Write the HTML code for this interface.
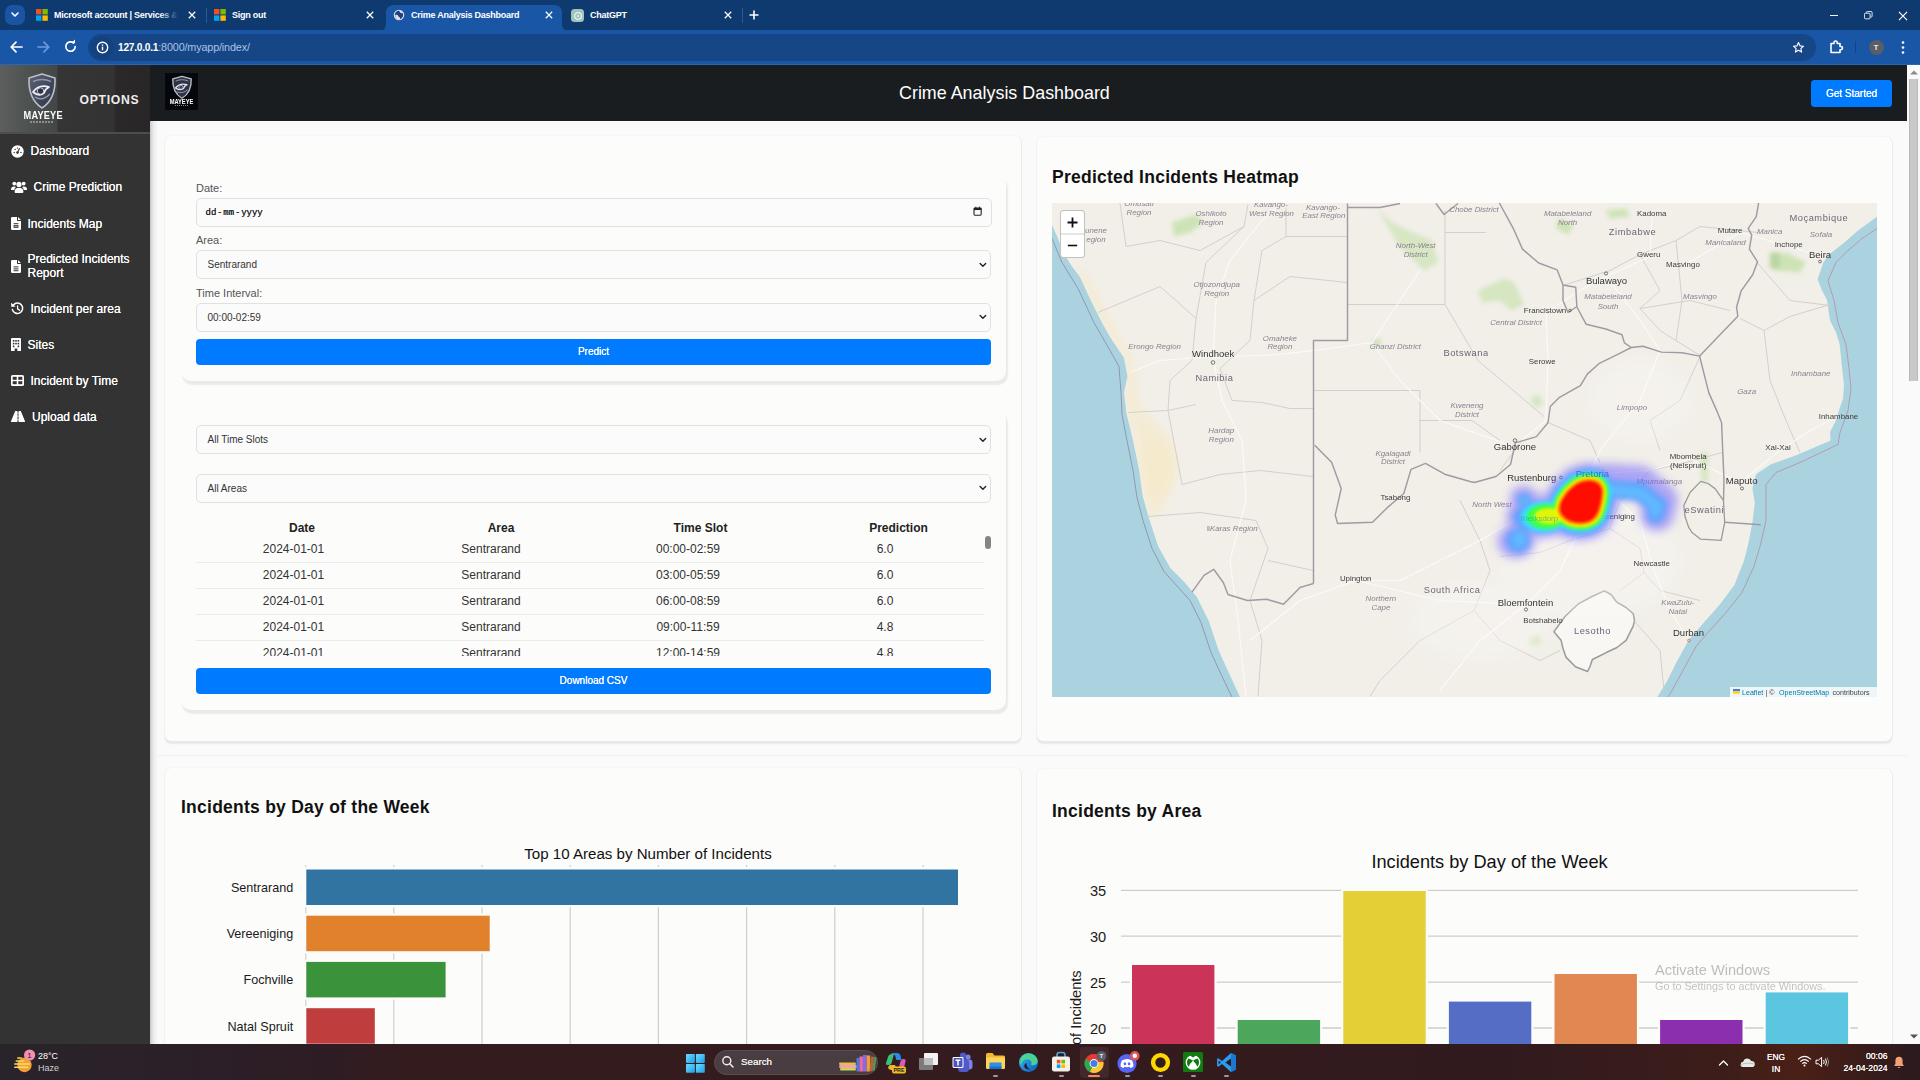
<!DOCTYPE html>
<html><head><meta charset="utf-8"><title>Crime Analysis Dashboard</title>
<style>
*{box-sizing:border-box}
html,body{margin:0;padding:0}
body{width:1920px;height:1080px;overflow:hidden;position:relative;background:#fafafa;font-family:"Liberation Sans",sans-serif;color:#222}
.abs{position:absolute}
/* ---------- browser chrome ---------- */
#tabs{position:absolute;left:0;top:0;width:1920px;height:31px;background:#0e3a70}
#toolbar{position:absolute;left:0;top:30px;width:1920px;height:35px;background:#1a56a6;border-bottom:1px solid #2b68b4}
.tabtxt{position:absolute;top:10.4px;font-size:9px;font-weight:700;color:#fff;white-space:nowrap;letter-spacing:-0.25px}
.tabx{position:absolute;top:9px;width:12px;height:12px}
#omni{position:absolute;left:88px;top:34px;width:1728px;height:27px;border-radius:14px;background:#164685}
/* ---------- page ---------- */
#page{position:absolute;left:0;top:65px;width:1920px;height:979px;overflow:hidden;background:#fafafa}
#side{position:absolute;left:0;top:0;width:150px;height:979px;background:#333333}
#sidehead{position:absolute;left:0;top:0;width:150px;height:68.5px;background:linear-gradient(90deg,#5c5f5d 0px,#4f5351 25px,#424644 57px,#353535 58px,#333333 114px,#2b2829 116px,#292627 150px);border-bottom:2px solid #4d4d4d}
.mi{position:absolute;left:0;color:#fff;font-size:12px;white-space:nowrap;text-shadow:0 0 .4px #fff}
#topnav{position:absolute;left:150px;top:0;width:1757px;height:56px;background:#1a1d20}
.card{position:absolute;background:#fcfcfb;border-radius:6px;box-shadow:0 2.5px 1.5px rgba(0,0,0,.07),1px 0 1px rgba(0,0,0,.05),-1px 0 1px rgba(0,0,0,.03),0 -1px 1px rgba(0,0,0,.015)}
.inner{position:absolute;border-radius:10px;box-shadow:1.5px 3.5px 1.5px rgba(0,0,0,.07)}
.lbl{position:absolute;font-size:11px;color:#555}
.inp{position:absolute;left:196px;width:794.5px;height:29px;border:1px solid #e1e1e1;border-radius:5px;background:#fbfbfb;font-size:10px;color:#333;padding:8px 0 0 10.5px;letter-spacing:0}
.btn{position:absolute;left:196px;width:795px;height:26px;border-radius:4px;background:#007bff;color:#fff;font-size:10px;text-align:center;line-height:26px;text-shadow:0 0 .6px #fff}
.h{position:absolute;font-weight:700;font-size:17.5px;color:#111;white-space:nowrap;letter-spacing:.25px}
.th{position:absolute;font-weight:700;font-size:12px;color:#222;transform:translateX(-50%);white-space:nowrap}
.td{position:absolute;font-size:12px;color:#333;transform:translateX(-50%);white-space:nowrap}
.rl{position:absolute;left:196px;width:788px;height:1px;background:#ebebeb}
/* ---------- taskbar ---------- */
#task{position:absolute;left:0;top:1044px;width:1920px;height:36px;background:linear-gradient(90deg,#29232a 0,#2b2028 170px,#2e1c24 330px,#341c1e 400px,#341b1d 1000px,#311a1e 1500px,#3c1d1a 1720px,#4a2016 1800px,#3a1c1a 1860px,#2a1a1e 1920px)}
.tt{position:absolute;color:#fff;font-size:9.5px;white-space:nowrap}
</style></head>
<body>
<!-- ======= TAB STRIP ======= -->
<div id="tabs">
  <div class="abs" style="left:5px;top:5px;width:20px;height:20px;border-radius:7px;background:#1a54a2"></div>
  <svg class="abs" style="left:10px;top:11px" width="10" height="8" viewBox="0 0 10 8"><path d="M2 2 L5 5 L8 2" fill="none" stroke="#fff" stroke-width="1.6" stroke-linecap="round" stroke-linejoin="round"/></svg>
  <!-- tab 1 -->
  <svg class="abs" style="left:36px;top:9px" width="12" height="12"><rect x="0" y="0" width="5.4" height="5.4" fill="#f25022"/><rect x="6.4" y="0" width="5.4" height="5.4" fill="#7fba00"/><rect x="0" y="6.4" width="5.4" height="5.4" fill="#00a4ef"/><rect x="6.4" y="6.4" width="5.4" height="5.4" fill="#ffb900"/></svg>
  <div class="tabtxt" id="t1" style="left:54px;width:124px;overflow:hidden">Microsoft account | Services &amp;</div>
  <div class="abs" style="left:160px;top:6px;width:18px;height:18px;background:linear-gradient(90deg,rgba(14,58,112,0),#0e3a70)"></div>
  <svg class="tabx" style="left:186px"><path d="M2.8 2.8 L9.2 9.2 M9.2 2.8 L2.8 9.2" stroke="#fff" stroke-width="1.25"/></svg>
  <div class="abs" style="left:206px;top:8px;width:1px;height:15px;background:#2a5a96"></div>
  <!-- tab 2 -->
  <svg class="abs" style="left:214px;top:9px" width="12" height="12"><rect x="0" y="0" width="5.4" height="5.4" fill="#f25022"/><rect x="6.4" y="0" width="5.4" height="5.4" fill="#7fba00"/><rect x="0" y="6.4" width="5.4" height="5.4" fill="#00a4ef"/><rect x="6.4" y="6.4" width="5.4" height="5.4" fill="#ffb900"/></svg>
  <div class="tabtxt" id="t2" style="left:232px">Sign out</div>
  <svg class="tabx" style="left:364px"><path d="M2.8 2.8 L9.2 9.2 M9.2 2.8 L2.8 9.2" stroke="#fff" stroke-width="1.25"/></svg>
  <!-- active tab -->
  <svg class="abs" style="left:378px;top:5px" width="192" height="26" viewBox="0 0 192 27" preserveAspectRatio="none"><path d="M0 27 C6 27 8 24 8 19 L8 8 C8 3 11 0 16 0 L176 0 C181 0 184 3 184 8 L184 19 C184 24 186 27 192 27 Z" fill="#1a56a6"/></svg>
  <svg class="abs" style="left:392px;top:8.3px" width="14" height="14" viewBox="0 0 14 14"><circle cx="7" cy="7" r="4.7" fill="#21407f" stroke="#dde1ee" stroke-width="1.1"/><path d="M3.2 7.2 C4.4 6.4 5.8 6.8 6.2 8 C6.6 9.2 8 9 8.2 10.2 C8.3 11 7.4 11.6 6.4 11.5 C4.4 11.2 3 9.4 3.2 7.2 Z M7.2 2.6 C8.6 2.5 10.2 3.4 10.9 4.8 C10.2 5.6 8.8 5.4 8.2 4.6 C7.8 4 7.2 3.4 7.2 2.6 Z" fill="#e4dfe8"/></svg>
  <div class="tabtxt" id="t3" style="left:411px">Crime Analysis Dashboard</div>
  <svg class="tabx" style="left:543px"><path d="M2.8 2.8 L9.2 9.2 M9.2 2.8 L2.8 9.2" stroke="#fff" stroke-width="1.25"/></svg>
  <!-- tab 4 -->
  <div class="abs" style="left:571px;top:9px;width:13px;height:13px;border-radius:3.5px;background:#9fc5bd"></div>
  <svg class="abs" style="left:572.5px;top:10.5px" width="10" height="10" viewBox="0 0 10 10"><circle cx="5" cy="5" r="3.4" fill="none" stroke="#e4f1ee" stroke-width="1.3"/><circle cx="5" cy="5" r="1.1" fill="#e4f1ee"/></svg>
  <div class="tabtxt" id="t4" style="left:590px">ChatGPT</div>
  <svg class="tabx" style="left:722px"><path d="M2.8 2.8 L9.2 9.2 M9.2 2.8 L2.8 9.2" stroke="#fff" stroke-width="1.25"/></svg>
  <div class="abs" style="left:742px;top:8px;width:1px;height:15px;background:#2a5a96"></div>
  <svg class="abs" style="left:748px;top:9px" width="12" height="12"><path d="M6 1.5 V10.5 M1.5 6 H10.5" stroke="#fff" stroke-width="1.6"/></svg>
  <!-- window controls -->
  <div class="abs" style="left:1830px;top:15px;width:7.5px;height:1px;background:#f4f4f4"></div>
  <svg class="abs" style="left:1864px;top:11px" width="10" height="10" viewBox="0 0 11.5 11.5"><rect x="0.5" y="2.5" width="6.5" height="6.5" rx="1.2" fill="none" stroke="#fff"/><path d="M2.8 2.3 V1.6 Q2.8 .5 3.9 .5 H8 Q9.3 .5 9.3 1.8 V6 Q9.3 7 8.3 7 H7.4" fill="none" stroke="#fff"/></svg>
  <svg class="abs" style="left:1898px;top:10.5px" width="10" height="10" viewBox="0 0 11 11"><path d="M1 1 L10 10 M10 1 L1 10" stroke="#fff" stroke-width="1.25"/></svg>
</div>
<!-- ======= TOOLBAR ======= -->
<div id="toolbar"></div>
<div id="omni"></div>
<svg class="abs" style="left:9px;top:40px" width="15" height="14" viewBox="0 0 15 14"><path d="M13 7 H2.5 M7 2.2 L2.2 7 L7 11.8" fill="none" stroke="#fff" stroke-width="1.7" stroke-linecap="round" stroke-linejoin="round"/></svg>
<svg class="abs" style="left:36px;top:40px" width="15" height="14" viewBox="0 0 15 14"><path d="M2 7 H12.5 M8 2.2 L12.8 7 L8 11.8" fill="none" stroke="#6b9bdc" stroke-width="1.7" stroke-linecap="round" stroke-linejoin="round"/></svg>
<svg class="abs" style="left:63px;top:39px" width="15" height="15" viewBox="0 0 15 15"><path d="M12.2 7.5 A4.7 4.7 0 1 1 10.6 4" fill="none" stroke="#fff" stroke-width="1.7" stroke-linecap="round"/><path d="M8.4 3.9 H12 V.6 Z" fill="#fff"/></svg>
<div class="abs" style="left:91px;top:36px;width:23px;height:23px;border-radius:12px;background:#14427f"></div>
<svg class="abs" style="left:96px;top:41px" width="13" height="13" viewBox="0 0 13 13"><circle cx="6.5" cy="6.5" r="5.2" fill="none" stroke="#fff" stroke-width="1.4"/><rect x="5.8" y="5.7" width="1.4" height="3.6" fill="#fff"/><rect x="5.8" y="3.4" width="1.4" height="1.4" fill="#fff"/></svg>
<div class="abs" id="url" style="left:118px;top:41px;font-size:10.8px;color:#fff;white-space:nowrap;letter-spacing:-.15px"><b style="font-weight:700;font-size:10.2px;letter-spacing:-.25px">127.0.0.1</b><span style="color:#a9c3e8">:8000/myapp/index/</span></div>
<svg class="abs" style="left:1792px;top:41px" width="13" height="13" viewBox="0 0 15 15"><path d="M7.5 1.8 L9.2 5.6 L13.3 6 L10.2 8.8 L11.1 12.8 L7.5 10.7 L3.9 12.8 L4.8 8.8 L1.7 6 L5.8 5.6 Z" fill="none" stroke="#fff" stroke-width="1.3" stroke-linejoin="round"/></svg>
<svg class="abs" style="left:1828px;top:39px" width="16" height="16" viewBox="0 0 16 16"><path d="M3 4.5 H6 V3.6 A1.6 1.6 0 0 1 9.2 3.6 V4.5 H12 V7.5 H12.9 A1.6 1.6 0 0 1 12.9 10.7 H12 V13.5 H3 Z" fill="none" stroke="#fff" stroke-width="1.6" stroke-linejoin="round"/></svg>
<div class="abs" style="left:1855px;top:41px;width:1px;height:12px;background:#12438a"></div>
<div class="abs" style="left:1868.5px;top:40px;width:15px;height:15px;border-radius:8px;background:#585d66;color:#ececec;font-size:7.5px;font-weight:700;text-align:center;line-height:15px">T</div>
<svg class="abs" style="left:1900px;top:40px" width="6" height="15"><circle cx="3" cy="2.5" r="1.3" fill="#fff"/><circle cx="3" cy="7.5" r="1.3" fill="#fff"/><circle cx="3" cy="12.5" r="1.3" fill="#fff"/></svg>

<!-- ======= PAGE ======= -->
<div id="page">
<!-- main bg shadow next to sidebar -->
<div class="abs" style="left:150px;top:56px;width:8px;height:923px;background:linear-gradient(90deg,#c9c9c9,#ececec 45%,#fafafa)"></div>
<!-- SIDEBAR -->
<div id="side">
  <div id="sidehead"></div>
  <!-- shield logo -->
  <svg class="abs" style="left:25px;top:7px" width="34" height="38" viewBox="0 0 34 38">
    <defs><linearGradient id="shg" x1="0" y1="0" x2="1" y2="1"><stop offset="0" stop-color="#5a6275"/><stop offset="1" stop-color="#2d3345"/></linearGradient></defs>
    <path d="M17 2 L30 6 C30.5 18 28 29 17 36 C6 29 3.5 18 4 6 Z" fill="url(#shg)" stroke="#b9bec9" stroke-width="1.6" stroke-linejoin="round"/>
    <path d="M8 9.5 Q17 5.5 26 9.5" fill="none" stroke="#8e96a8" stroke-width="1.4"/>
    <path d="M8 20 Q14 12 24 15 Q20 17 19 21 Q14 25 8 20 Z" fill="none" stroke="#f2f2f2" stroke-width="1.7" stroke-linejoin="round"/>
    <circle cx="15.5" cy="19" r="3.2" fill="#2a3150" stroke="#dfe2ea" stroke-width=".8"/>
    <path d="M10 25 Q17 30 25 22" fill="none" stroke="#9aa1b3" stroke-width="1.2"/>
  </svg>
  <div class="abs" style="left:22px;top:45px;width:40px;text-align:center;font-size:10px;font-weight:700;color:#fff;letter-spacing:.2px;transform:scaleX(.92);transform-origin:center">MAYEYE</div>
  <div class="abs" style="left:30px;top:55.5px;width:24px;height:2px;background:repeating-linear-gradient(90deg,#8d8d8d 0 2px,transparent 2px 3px)"></div>
  <div class="abs" id="opt" style="left:79.5px;top:27.5px;font-size:12.2px;font-weight:700;color:#ededed;letter-spacing:.7px">OPTIONS</div>

  <!-- menu -->
  <svg class="abs" style="left:10.5px;top:80px" width="13" height="13" viewBox="0 0 13 13"><circle cx="6.5" cy="6.5" r="6.2" fill="#fff"/><circle cx="6.5" cy="7.6" r="1.3" fill="#333"/><path d="M6.5 7.6 L8.6 3.2" stroke="#333" stroke-width="1.1"/><circle cx="3.2" cy="7.5" r=".7" fill="#333"/><circle cx="4.2" cy="4.4" r=".7" fill="#333"/><circle cx="6.5" cy="3.1" r=".7" fill="#333"/><circle cx="9.9" cy="7.5" r=".7" fill="#333"/></svg>
  <div class="mi" style="left:30.5px;top:78.8px">Dashboard</div>

  <svg class="abs" style="left:10.5px;top:116px" width="16" height="12" viewBox="0 0 16 12"><circle cx="3.3" cy="2.6" r="1.9" fill="#fff"/><circle cx="12.7" cy="2.6" r="1.9" fill="#fff"/><circle cx="8" cy="3.4" r="2.6" fill="#fff"/><path d="M0 8.4 Q0 5.4 3.2 5.4 Q4.4 5.4 5 6 Q3.4 7 3.3 9 H.6 Q0 9 0 8.4 Z M16 8.4 Q16 5.4 12.8 5.4 Q11.6 5.4 11 6 Q12.6 7 12.7 9 H15.4 Q16 9 16 8.4 Z M3.6 10.8 Q3.6 6.8 8 6.8 Q12.4 6.8 12.4 10.8 Q12.4 12 11.4 12 H4.6 Q3.6 12 3.6 10.8 Z" fill="#fff"/></svg>
  <div class="mi" style="left:33.5px;top:114.8px">Crime Prediction</div>

  <svg class="abs" style="left:10.5px;top:151.5px" width="10" height="13" viewBox="0 0 10 13"><path d="M1.2 0 H6 V3.2 Q6 4 6.8 4 H10 V11.8 Q10 13 8.8 13 H1.2 Q0 13 0 11.8 V1.2 Q0 0 1.2 0 Z M7 0 L10 3 H7 Z" fill="#fff"/><rect x="2.6" y="6.2" width="4.8" height="1" fill="#333"/><rect x="2.6" y="8" width="4.8" height="2.8" fill="#333"/><rect x="3.4" y="8.8" width="3.2" height=".7" fill="#fff"/></svg>
  <div class="mi" style="left:27.5px;top:151.5px">Incidents Map</div>

  <svg class="abs" style="left:10.5px;top:194.8px" width="10" height="13" viewBox="0 0 10 13"><path d="M1.2 0 H6 V3.2 Q6 4 6.8 4 H10 V11.8 Q10 13 8.8 13 H1.2 Q0 13 0 11.8 V1.2 Q0 0 1.2 0 Z M7 0 L10 3 H7 Z" fill="#fff"/><rect x="2.6" y="6.4" width="4.8" height="1" fill="#333"/><rect x="2.6" y="8.4" width="4.8" height="1" fill="#333"/><rect x="2.6" y="10.2" width="4.8" height="1" fill="#333"/></svg>
  <div class="mi" style="left:27.5px;top:188.3px;line-height:13.5px">Predicted Incidents<br>Report</div>

  <svg class="abs" style="left:10.5px;top:237px" width="13" height="13" viewBox="0 0 13 13"><path d="M2.4 3 A5.2 5.2 0 1 1 1.4 7.6" fill="none" stroke="#fff" stroke-width="1.5" stroke-linecap="round"/><path d="M0 .8 L.4 5 L4.6 4.4 Z" fill="#fff"/><path d="M6.6 3.8 V6.8 L8.6 8.3" fill="none" stroke="#fff" stroke-width="1.3" stroke-linecap="round"/></svg>
  <div class="mi" style="left:30.5px;top:236.5px">Incident per area</div>

  <svg class="abs" style="left:10.5px;top:273px" width="10" height="13" viewBox="0 0 10 13"><path d="M1 0 H9 Q10 0 10 1 V13 H6.3 V10.4 H3.7 V13 H0 V1 Q0 0 1 0 Z" fill="#fff"/><g fill="#333"><rect x="1.8" y="2" width="1.6" height="1.6"/><rect x="4.2" y="2" width="1.6" height="1.6"/><rect x="6.6" y="2" width="1.6" height="1.6"/><rect x="1.8" y="4.8" width="1.6" height="1.6"/><rect x="4.2" y="4.8" width="1.6" height="1.6"/><rect x="6.6" y="4.8" width="1.6" height="1.6"/><rect x="1.8" y="7.6" width="1.6" height="1.6"/><rect x="6.6" y="7.6" width="1.6" height="1.6"/></g></svg>
  <div class="mi" style="left:27.5px;top:272.5px">Sites</div>

  <svg class="abs" style="left:10.5px;top:310px" width="13" height="11" viewBox="0 0 13 11"><rect x="0" y="0" width="13" height="11" rx="1.6" fill="#fff"/><g fill="#333"><rect x="1.7" y="1.8" width="4" height="3"/><rect x="7.3" y="1.8" width="4" height="3"/><rect x="1.7" y="6.2" width="4" height="3"/><rect x="7.3" y="6.2" width="4" height="3"/></g></svg>
  <div class="mi" style="left:30.5px;top:308.5px">Incident by Time</div>

  <svg class="abs" style="left:10.5px;top:346px" width="14" height="11" viewBox="0 0 14 11"><path d="M4.2 0 H6.4 V11 H.6 Q-.3 11 .1 10 Z M7.6 0 H9.8 L13.9 10 Q14.3 11 13.4 11 H7.6 Z" fill="#fff"/><rect x="6.5" y="1.4" width="1" height="1.8" fill="#fff"/><rect x="6.5" y="4.4" width="1" height="1.8" fill="#fff"/><rect x="6.5" y="7.6" width="1" height="2" fill="#fff"/></svg>
  <div class="mi" style="left:32px;top:344.5px">Upload data</div>
</div>

<!-- TOP NAV -->
<div id="topnav">
  <div class="abs" style="left:15px;top:8px;width:33px;height:37px;background:#05070c"></div>
  <svg class="abs" style="left:20px;top:9.5px" width="24" height="24.5" viewBox="0 0 34 38" preserveAspectRatio="none">
    <path d="M17 2 L30 6 C30.5 18 28 29 17 36 C6 29 3.5 18 4 6 Z" fill="#2d3345" stroke="#b9bec9" stroke-width="2" stroke-linejoin="round"/>
    <path d="M8 9.5 Q17 5.5 26 9.5" fill="none" stroke="#8e96a8" stroke-width="1.6"/>
    <path d="M8 20 Q14 12 24 15 Q20 17 19 21 Q14 25 8 20 Z" fill="none" stroke="#e8e8e8" stroke-width="2" stroke-linejoin="round"/>
    <circle cx="15.5" cy="19" r="3" fill="#39415e" stroke="#cfd3de" stroke-width="1"/>
    <path d="M10 26 Q17 30 25 23" fill="none" stroke="#9aa1b3" stroke-width="1.4"/>
  </svg>
  <div class="abs" style="left:15px;top:32.5px;width:33px;text-align:center;font-size:6.5px;font-weight:700;color:#fff;letter-spacing:0;transform:scaleX(.88)">MAYEYE</div><div class="abs" style="left:25px;top:39.5px;width:14px;height:1.2px;background:repeating-linear-gradient(90deg,#8a8a8a 0 1.2px,transparent 1.2px 2px)"></div>
  <div class="abs" id="title" style="left:749px;top:18px;font-size:17.9px;color:#fff;white-space:nowrap">Crime Analysis Dashboard</div>
  <div class="abs" id="gs" style="left:1661px;top:15px;width:81px;height:27px;border-radius:3.5px;background:#007bff;color:#fff;font-size:10px;text-align:center;line-height:28px;text-shadow:0 0 .6px #fff">Get Started</div>
</div>

<!-- SCROLLBAR -->
<div class="abs" style="left:1907px;top:0;width:13px;height:979px;background:#fafafa"></div>
<svg class="abs" style="left:1910px;top:5px" width="8" height="5"><path d="M0 4.5 L4 .5 L8 4.5 Z" fill="#8b8b8b"/></svg>
<div class="abs" style="left:1909px;top:14px;width:9px;height:302px;background:#cac9c9;border-left:1px solid #b9b7b8;border-right:1px solid #b9b7b8"></div>
<svg class="abs" style="left:1910px;top:969px" width="8" height="5"><path d="M0 .5 L4 4.5 L8 .5 Z" fill="#555"/></svg>

<div class="abs" style="left:158px;top:690px;width:1749px;height:1px;background:#f0efee"></div>
<!-- LEFT CARD (form + table) -->
<div class="card" style="left:165px;top:71px;width:856px;height:605px"></div>
<div class="inner" style="left:181px;top:110px;width:825px;height:206px"></div>
<div class="lbl" style="left:196px;top:116.5px">Date:</div>
<div class="inp" style="top:132.5px;width:796px;font-family:'Liberation Mono',monospace;font-size:9px;padding-left:8.5px;padding-top:9.5px;letter-spacing:0;color:#1f1f1f;text-shadow:0 0 .3px #333">dd<span style="margin:0 .8px">-</span>mm<span style="margin:0 .8px">-</span>yyyy</div>
<svg class="abs" style="left:972.8px;top:141.3px" width="9.2" height="10.4" viewBox="0 0 11 12"><rect x="1.2" y="2.2" width="8.6" height="8.6" rx="1" fill="none" stroke="#222" stroke-width="1.3"/><rect x="1.2" y="2.2" width="8.6" height="2.4" fill="#222"/><rect x="2.8" y=".6" width="1.2" height="2" fill="#222"/><rect x="7" y=".6" width="1.2" height="2" fill="#222"/></svg>
<div class="lbl" style="left:196px;top:169px">Area:</div>
<div class="inp" style="top:185px">Sentrarand</div>
<div class="lbl" style="left:196px;top:221.5px">Time Interval:</div>
<div class="inp" style="top:237.5px">00:00-02:59</div>
<div class="btn" style="top:274px">Predict</div>

<div class="inner" style="left:181px;top:345px;width:825px;height:300px"></div>
<div class="inp" style="top:360px">All Time Slots</div>
<div class="inp" style="top:408.5px">All Areas</div>
<!-- select chevrons -->
<svg class="abs chev" style="left:979.3px;top:196.6px" width="7.8" height="6.2" viewBox="0 0 9 7"><path d="M1.3 1.6 L4.5 4.8 L7.7 1.6" fill="none" stroke="#222" stroke-width="1.6" stroke-linecap="round" stroke-linejoin="round"/></svg>
<svg class="abs chev" style="left:979.3px;top:249.1px" width="7.8" height="6.2" viewBox="0 0 9 7"><path d="M1.3 1.6 L4.5 4.8 L7.7 1.6" fill="none" stroke="#222" stroke-width="1.6" stroke-linecap="round" stroke-linejoin="round"/></svg>
<svg class="abs chev" style="left:979.3px;top:371.6px" width="7.8" height="6.2" viewBox="0 0 9 7"><path d="M1.3 1.6 L4.5 4.8 L7.7 1.6" fill="none" stroke="#222" stroke-width="1.6" stroke-linecap="round" stroke-linejoin="round"/></svg>
<svg class="abs chev" style="left:979.3px;top:420.1px" width="7.8" height="6.2" viewBox="0 0 9 7"><path d="M1.3 1.6 L4.5 4.8 L7.7 1.6" fill="none" stroke="#222" stroke-width="1.6" stroke-linecap="round" stroke-linejoin="round"/></svg>
<!-- table -->
<div class="th" style="left:302px;top:456px">Date</div>
<div class="th" style="left:501px;top:456px">Area</div>
<div class="th" style="left:700.5px;top:456px">Time Slot</div>
<div class="th" style="left:898.5px;top:456px">Prediction</div>
<div class="abs" style="left:196px;top:470px;width:796px;height:121px;overflow:hidden">
  <div class="td" style="left:97.5px;top:7px">2024-01-01</div><div class="td" style="left:295px;top:7px">Sentrarand</div><div class="td" style="left:492px;top:7px">00:00-02:59</div><div class="td" style="left:689px;top:7px">6.0</div>
  <div class="td" style="left:97.5px;top:33px">2024-01-01</div><div class="td" style="left:295px;top:33px">Sentrarand</div><div class="td" style="left:492px;top:33px">03:00-05:59</div><div class="td" style="left:689px;top:33px">6.0</div>
  <div class="td" style="left:97.5px;top:59px">2024-01-01</div><div class="td" style="left:295px;top:59px">Sentrarand</div><div class="td" style="left:492px;top:59px">06:00-08:59</div><div class="td" style="left:689px;top:59px">6.0</div>
  <div class="td" style="left:97.5px;top:85px">2024-01-01</div><div class="td" style="left:295px;top:85px">Sentrarand</div><div class="td" style="left:492px;top:85px">09:00-11:59</div><div class="td" style="left:689px;top:85px">4.8</div>
  <div class="td" style="left:97.5px;top:111px">2024-01-01</div><div class="td" style="left:295px;top:111px">Sentrarand</div><div class="td" style="left:492px;top:111px">12:00-14:59</div><div class="td" style="left:689px;top:111px">4.8</div>
</div>
<div class="rl" style="top:497px"></div><div class="rl" style="top:523px"></div><div class="rl" style="top:549px"></div><div class="rl" style="top:575px"></div>
<div class="abs" style="left:984.5px;top:470.5px;width:6px;height:13.5px;border-radius:3px;background:#858585"></div>
<div class="btn" style="top:602.5px">Download CSV</div>

<!-- RIGHT CARD (map) -->
<div class="card" style="left:1037px;top:72px;width:855px;height:604px"></div>
<div class="h" id="h1" style="left:1052px;top:102px">Predicted Incidents Heatmap</div>
<svg class="abs" id="map" style="left:1052px;top:137.5px" width="825" height="494" viewBox="1052 202.5 825 494" font-family="Liberation Sans, sans-serif">
<defs>
  <filter id="b1" x="-30%" y="-30%" width="160%" height="160%"><feGaussianBlur stdDeviation="1"/></filter>
  <filter id="b15" x="-30%" y="-30%" width="160%" height="160%"><feGaussianBlur stdDeviation="1.5"/></filter>
  <filter id="b2" x="-30%" y="-30%" width="160%" height="160%"><feGaussianBlur stdDeviation="2"/></filter>
  <filter id="b3" x="-30%" y="-30%" width="160%" height="160%"><feGaussianBlur stdDeviation="3.2"/></filter>
  <filter id="b5" x="-30%" y="-30%" width="160%" height="160%"><feGaussianBlur stdDeviation="5"/></filter>
  <filter id="b8" x="-50%" y="-50%" width="200%" height="200%"><feGaussianBlur stdDeviation="8"/></filter>
</defs>
<rect x="1052" y="202.5" width="825" height="494" fill="#f2efe9"/>
<!-- sandy Namib -->
<g filter="url(#b3)" opacity=".6"><path d="M1072 262 L1080 276 L1096 311 L1110 337 L1124 357 L1127.5 376 L1124 392 L1126 413 L1131 431 L1133 440 L1139 469 L1143 495 L1149 517 L1158 517 L1168 497 L1177 470 L1174 446 L1166 432 L1150 416 L1137 397 L1138 378 L1133 356 L1120 334 L1105 308 L1088 274 Z" fill="#f6eacb"/></g>
<g filter="url(#b8)" opacity=".6"><ellipse cx="1158" cy="466" rx="16" ry="30" fill="#f7e9c4"/></g>
<!-- green patches -->
<g filter="url(#b2)" fill="#cde3b5">
  <path d="M1172 222 L1196 214 L1204 222 L1190 232 L1174 236 Z"/>
  <path d="M1378 208 L1392 222 L1404 228 L1432 240 L1438 262 L1424 270 L1412 258 L1398 244 L1388 226 Z" opacity=".75"/>
  <path d="M1478 290 L1496 282 L1504 278 L1514 282 L1524 304 L1512 310 L1500 300 L1482 302 Z" opacity=".8"/>
  <path d="M1558 218 L1574 224 L1568 234 L1556 228 Z"/><path d="M1606 210 L1626 208 L1630 216 L1610 218 Z"/>
  <path d="M1772 256 L1786 252 L1806 262 L1800 272 L1774 270 Z"/><path d="M1770 252 h10 v16 h-10 z" fill="#b9d6a0"/>
  <path d="M1700 452 h8 v30 h-6 z" opacity=".8"/><path d="M1528 638 l10 -4 l4 8 l-10 4 z" opacity=".7"/>
  <path d="M1372 340 l8 -2 l2 6 l-9 2 z"/><path d="M1530 398 l8 -4 l6 8 l-8 6 z" opacity=".8"/>
</g>
<!-- water -->
<path id="wsea" d="M1052 224.3 L1058 238 L1063.9 253.2 L1072 266 L1080 276.4 L1088 294 L1096.3 311 L1103 324 L1110 336.6 L1117 347 L1124 357.4 L1127.5 376 L1124 392 L1126.4 413 L1131 431.5 L1133 440 L1139 468.9 L1142.7 495.4 L1148.7 517 L1158.3 545.9 L1170.3 567.6 L1184.8 582 L1196.8 596.4 L1208.8 620.5 L1218.5 649.4 L1230.5 675.9 L1240 696.5 L1052 696.5 Z" fill="#aad3df"/>
<path id="esea" d="M1877 216.2 L1858 230 L1842 244 L1829 254 L1823.4 262 L1817.6 278.7 L1822 290 L1827 299.5 L1830 320 L1836 332 L1839.6 343.5 L1842 366.7 L1844 385 L1843 398 L1839.6 408 L1836 420 L1830 431.5 L1830.6 440 L1812 448 L1797 454.4 L1770.5 464 L1756 473.7 L1752.4 488 L1754.8 502.6 L1752.4 521.8 L1748.8 541 L1744 560.3 L1734.4 584.4 L1720 603.7 L1703 623 L1688.6 639.8 L1676.6 661.4 L1667 680.7 L1657.4 696.5 L1877 696.5 Z" fill="#aad3df"/>
<!-- maritime boundary lines -->
<path d="M1052 238 L1062 262 L1078 288 L1094 322 L1110 350 L1119 366 L1121 392 L1122 414 L1127 440 L1133 470 L1137 497 L1143 520 L1152 548 L1164 571 L1190 600 L1201 622 L1211 652 L1223 678 L1232 696.5" fill="none" stroke="#8d8cab" stroke-width="1" opacity=".85"/>
<path d="M1877 228 L1862 238 L1848 250 L1836 262 L1828 280 L1834 300 L1838 322 L1846 344 L1849 368 L1851 388 L1848 410 L1840 432 L1838 444 L1800 462 L1776 472 L1766 484 L1766 520 L1760 546 L1754 566 L1742 592 L1726 612 L1708 632 L1696 646 L1684 668 L1672 690 L1668 696.5" fill="none" stroke="#b08fa8" stroke-width="1" opacity=".8"/>
<!-- Lesotho + eSwatini fills -->
<path id="les" d="M1553.9 631.3 L1565 616 L1577.9 603.7 L1592 596 L1604.4 590.4 L1611 594 L1616.4 601.3 L1626 607 L1633.3 613.3 L1634.5 620 L1633.3 625.3 L1626.1 639.8 L1617 647 L1606.8 651.8 L1592.4 659 L1590 666 L1587.6 671 L1575.5 666.2 L1565.9 656.6 L1563 648 L1561.1 639.8 Z" fill="#f8f7f4" stroke="#9a9a9a" stroke-width="1.5" stroke-linejoin="round"/>
<path id="esw" d="M1683.8 505 L1690 492 L1700.7 480.9 L1708 483 L1715.1 488.1 L1723.5 500.2 L1724.7 521.8 L1721.1 539.9 L1700.7 538.7 L1692 532 L1688.6 526.6 L1685 516 Z" fill="none" stroke="#9a9a9a" stroke-width="1.3" stroke-linejoin="round"/>
<!-- admin (light) boundaries -->
<g fill="none" stroke="#d2cfcd" stroke-width="1">
  <path d="M1347.5 304 H1445 L1478 360 L1544 416"/><path d="M1313.5 390 H1420 V452"/><path d="M1420 420 H1472 L1500 440"/>
  <path d="M1445 304 V232 H1486"/><path d="M1445 232 V210"/><path d="M1286 207 V236 H1347"/>
  <path d="M1120 203 L1126 246 L1160 240 L1200 250 L1244 226 L1248 204"/><path d="M1098 312 L1160 286 L1176 300 L1196 318 L1192 360 L1170 380 L1168 410 L1196 404"/>
  <path d="M1196 318 L1206 262 L1244 226"/><path d="M1254 300 L1262 250 L1286 236"/><path d="M1254 300 L1250 340 L1220 368 L1232 400 L1262 402 L1290 408 L1313 408"/>
  <path d="M1254 300 L1290 276 L1347 282"/><path d="M1128 412 L1168 410 L1182 484 L1220 474 L1260 470 L1313 476"/>
  <path d="M1148 516 L1200 512 L1256 520 L1268 548 L1250 600"/><path d="M1268 560 L1313 570"/>
  <path d="M1563 285 L1610 270 L1640 254 L1676 240 L1700 226 L1758 232"/><path d="M1640 254 L1660 290 L1640 308 L1690 300 L1730 310"/><path d="M1676 240 L1682 300 L1676 340"/>
  <path d="M1640 308 L1660 330 L1700 355"/><path d="M1757 262 L1790 300 L1830 305"/><path d="M1740 318 L1764 330 L1790 316 L1830 304"/><path d="M1764 330 L1770 380 L1786 420 L1800 452"/>
  <path d="M1500 556 L1540 552 L1570 540 L1610 528 L1640 548 L1644 572 L1660 590 L1700 600"/><path d="M1610 528 L1620 500 L1650 470 L1686 462 L1722 452"/>
  <path d="M1460 500 L1480 540 L1490 570 L1474 610 L1500 640 L1540 660 L1560 650"/><path d="M1644 572 L1620 590"/><path d="M1634 620 L1660 650 L1664 690"/>
  <path d="M1474 610 L1420 640 L1380 680 L1370 696"/><path d="M1250 600 L1262 640 L1258 696"/><path d="M1522 440 L1500 470"/><path d="M1548 422 L1590 440 L1600 462"/>
  <path d="M1700 356 L1680 400 L1650 420 L1660 450"/>
</g>
<!-- roads (white-ish) -->
<g fill="none" stroke="#fbfaf8" stroke-width="1.1">
  <path d="M1213 356 L1216 300 L1230 260 L1262 220 L1280 204"/><path d="M1213 358 L1222 400 L1242 440 L1246 500 L1230 560 L1238 620 L1246 696"/><path d="M1213 356 L1160 360 L1130 372"/>
  <path d="M1213 357 L1280 354 L1330 348 L1372 342 L1400 380 L1440 420 L1514 446"/><path d="M1372 342 L1400 300 L1420 270"/>
  <path d="M1514 446 L1546 420 L1548 360 L1546 312 L1580 290 L1606 276 L1650 256 L1652 216"/><path d="M1606 276 L1640 320 L1660 350 L1640 400 L1600 450 L1590 474"/>
  <path d="M1590 474 L1584 520 L1560 570 L1526 604 L1480 640 L1440 690"/><path d="M1590 474 L1640 520 L1652 564 L1670 610 L1688 638"/><path d="M1590 474 L1650 470 L1690 458 L1740 482"/>
  <path d="M1526 604 L1440 600 L1356 580 L1300 600 L1250 640"/><path d="M1584 500 L1530 510 L1480 540 L1400 580 L1356 580"/><path d="M1682 266 L1740 232 L1790 246 L1820 256"/><path d="M1740 482 L1780 450 L1810 430 L1838 416"/>
</g>
<g filter="url(#b8)" fill="#fbfaf8" opacity=".35"><ellipse cx="1590" cy="560" rx="90" ry="60"/><ellipse cx="1640" cy="400" rx="50" ry="40"/><ellipse cx="1480" cy="620" rx="70" ry="40"/></g>
<!-- country borders -->
<g fill="none" stroke="#9f9aa3" stroke-width="1.45" stroke-linejoin="round">
  <path d="M1347.5 203 V340 H1313.5 V444.8 V583"/>
  <path d="M1313.5 583 L1300 587 L1290.7 596.4 L1283.5 603.7 L1266.6 598.8 L1247.4 600 L1228 594 L1223.3 582 L1213.7 568.8 L1204 574.8 L1192 591.6"/>
  <path d="M1314.7 444.8 L1331.6 461.7 L1341.2 488.1 L1335.2 514.6 L1337.6 523 L1372.5 521.8 L1387 507.4 L1403.8 493 L1411 468.9 L1425.5 462.9 L1444.7 473.7 L1470 481 L1474.4 482 L1496 476 L1510.5 464 L1515.4 442.4 L1536.4 436.1 L1548 422.2 L1550.3 406 L1559.5 396.8 L1580.4 385.2 L1587.3 373.6 L1598.9 363.2 L1619.7 352.8 L1631.3 347"/>
  <path d="M1499.4 202.5 L1513.2 227.8 L1522.5 248.6 L1538.7 262.5 L1557.2 269.4 L1563 284.5 L1575.7 286.8 L1576.9 306.5 L1586.2 323.8 L1605.8 328.5 L1622 334.3 L1624.4 342.4 L1631.3 347 L1642.9 345.8 L1661.4 351.6 L1682.2 352.3 L1699.6 355.6"/>
  <path d="M1699.6 355.6 L1737.8 315.7 L1736.6 306.5 L1741.2 290.3 L1752.8 274 L1757.5 261.3 L1749.4 248.6 L1751.7 234.7 L1748.2 227.8 L1756.3 216.2 L1758.6 202.5"/>
  <path d="M1699.6 355.6 L1708.8 392.1 L1716.9 410.6 L1721.6 422.2 L1722.7 450 L1724 480 L1723.5 500"/>
  <path d="M1724.7 521.8 L1760.8 524.2"/>
  <path d="M1347.5 207 H1380 L1400 203"/><path d="M1436 203 L1444 214 L1458 203"/>
  <path d="M1563 285 L1563 300 L1568 312 L1577 306"/>
</g>
<!-- LABELS -->
<g font-size="7.9" fill="#8a8291" font-style="italic" text-anchor="middle" transform="translate(0 -1.2)">
  <text x="1139" y="207">Omusati</text><text x="1139" y="215.7">Region</text>
  <text x="1096" y="233.5">unene</text><text x="1096" y="242.8">egion</text>
  <text x="1211" y="217">Oshikoto</text><text x="1211" y="225.7">Region</text>
  <text x="1271" y="207.6">Kavango-</text><text x="1271.5" y="216.4">West Region</text>
  <text x="1323" y="210.6">Kavango-</text><text x="1323.8" y="219.2">East Region</text>
  <text x="1474" y="213">Chobe District</text>
  <text x="1415.7" y="248.6">North-West</text><text x="1415.7" y="257.4">District</text>
  <text x="1216.7" y="288.2">Otjozondjupa</text><text x="1216.7" y="297.2">Region</text>
  <text x="1154.6" y="350.2">Erongo Region</text>
  <text x="1279.9" y="341.4">Omaheke</text><text x="1279.9" y="350.2">Region</text>
  <text x="1395.4" y="350.2">Ghanzi District</text>
  <text x="1467" y="409">Kweneng</text><text x="1467" y="418">District</text>
  <text x="1221.3" y="433.8">Hardap</text><text x="1221.3" y="442.6">Region</text>
  <text x="1567.6" y="216.9">Matabeleland</text><text x="1567.6" y="225.7">North</text>
  <text x="1769.7" y="235">Manica</text><text x="1821" y="238.2">Sofala</text><text x="1725.5" y="245.8">Manicaland</text>
  <text x="1608" y="300.2">Matabeleland</text><text x="1608" y="309.5">South</text><text x="1700" y="300.2">Masvingo</text>
  <text x="1516" y="325.9">Central District</text><text x="1632" y="410.6">Limpopo</text><text x="1746.6" y="394.7">Gaza</text><text x="1810.7" y="377">Inhambane</text>
  <text x="1659.3" y="484.6">Mpumalanga</text><text x="1492" y="508">North West</text>
  <text x="1677.8" y="606.2">KwaZulu-</text><text x="1677.8" y="614.8">Natal</text>
  <text x="1393" y="456.7">Kgalagadi</text><text x="1393" y="465.1">District</text><text x="1232.2" y="532">ǁKaras Region</text>
  <text x="1380.9" y="601.8">Northern</text><text x="1380.9" y="611">Cape</text>
</g>
<g font-size="7.9" fill="#3c3c3c" text-anchor="middle" transform="translate(0 -1.2)">
  <text x="1651.7" y="217">Kadoma</text><text x="1730.1" y="233.6">Mutare</text><text x="1788.7" y="248.1">Inchope</text>
  <text x="1648.7" y="257.6">Gweru</text><text x="1682.9" y="267.8">Masvingo</text><text x="1545" y="313.4">Francistown</text>
  <text x="1542.2" y="364.8">Serowe</text><text x="1838.5" y="419.4">Inhambane</text><text x="1778" y="451">Xai-Xai</text>
  <text x="1688.2" y="459.4">Mbombela</text><text x="1688.2" y="468.3">(Nelspruit)</text>
  <text x="1651.8" y="567">Newcastle</text><text x="1543" y="624">Botshabelo</text><text x="1395.4" y="500.8">Tsabong</text><text x="1355.7" y="582.1">Upington</text>
  <text x="1614" y="519.5">Vereeniging</text>
</g>
<g font-size="9.5" fill="#333" text-anchor="middle" transform="translate(0 -1.2)">
  <text x="1213.2" y="358.2">Windhoek</text><text x="1820" y="258.5">Beira</text><text x="1606.5" y="284.6">Bulawayo</text><text x="1514.9" y="451">Gaborone</text>
  <text x="1531.7" y="481.6">Rustenburg</text><text x="1741.6" y="485">Maputo</text><text x="1525.5" y="606.6">Bloemfontein</text><text x="1688.6" y="636.6">Durban</text>
</g>
<g font-size="9.3" fill="#6f6378" text-anchor="middle" letter-spacing=".55" transform="translate(0 -1.2)">
  <text x="1214.4" y="381.5">Namibia</text><text x="1466" y="356.5">Botswana</text><text x="1632.5" y="236">Zimbabwe</text><text x="1818.8" y="221.6">Moçambique</text>
  <text x="1704.3" y="514">eSwatini</text><text x="1592.4" y="634.5">Lesotho</text><text x="1452" y="593.5">South Africa</text>
</g>
<!-- city dots -->
<g fill="none" stroke="#555" stroke-width=".8"><circle cx="1213" cy="362" r="1.8"/><circle cx="1515" cy="440" r="1.8"/><circle cx="1526" cy="609" r="1.6"/><circle cx="1606" cy="273" r="1.6"/><circle cx="1820" cy="261" r="1.4"/><circle cx="1742" cy="488" r="1.5"/><circle cx="1561" cy="477" r="1.4"/><circle cx="1570" cy="310" r="1.3"/><circle cx="1689" cy="640" r="1.4" stroke="#d66"/></g>
<!-- HEATMAP -->
<g id="heat">
  <g filter="url(#b5)" fill="#6c5cff" opacity=".5">
    <path d="M1590.2 479.5 C1595 480 1599 481.5 1600.6 484.1 C1603 488 1603.2 491 1602.5 494.4 C1602 500 1601 505 1599.3 510 C1597.5 515 1595 518.5 1591.5 520.4 C1587 522.8 1583 523.4 1578.5 523 C1573 522.6 1568.5 521.6 1565.6 519.1 C1562 516.5 1559.6 513.5 1559.1 510 C1558.6 505 1560.5 501 1563 497 C1566 492 1569.5 488.5 1573.3 485.4 C1576.5 482.8 1580 481 1583.7 480.2 C1586 479.6 1588 479.4 1590.2 479.5 Z" stroke="#6c5cff" stroke-width="34" stroke-linejoin="round"/>
    <ellipse cx="1540" cy="516" rx="34" ry="22"/><ellipse cx="1516" cy="541" rx="19" ry="17"/><ellipse cx="1524" cy="497" rx="14" ry="12"/>
    <path d="M1606 480 L1640 482 L1661 500 L1657 514" fill="none" stroke="#6c5cff" stroke-width="34" stroke-linecap="round" stroke-linejoin="round"/>
  </g>
  <g filter="url(#b3)" fill="#4f9dff" opacity=".82">
    <path d="M1590.2 479.5 C1595 480 1599 481.5 1600.6 484.1 C1603 488 1603.2 491 1602.5 494.4 C1602 500 1601 505 1599.3 510 C1597.5 515 1595 518.5 1591.5 520.4 C1587 522.8 1583 523.4 1578.5 523 C1573 522.6 1568.5 521.6 1565.6 519.1 C1562 516.5 1559.6 513.5 1559.1 510 C1558.6 505 1560.5 501 1563 497 C1566 492 1569.5 488.5 1573.3 485.4 C1576.5 482.8 1580 481 1583.7 480.2 C1586 479.6 1588 479.4 1590.2 479.5 Z" stroke="#4f9dff" stroke-width="23" stroke-linejoin="round"/>
    <ellipse cx="1540" cy="517" rx="27" ry="15"/><ellipse cx="1518" cy="540" rx="12" ry="12"/><ellipse cx="1524" cy="499" rx="7" ry="6"/>
    <path d="M1606 488 L1640 490.5 L1658.5 505 L1655.5 514" fill="none" stroke="#4f9dff" stroke-width="18" stroke-linecap="round" stroke-linejoin="round"/>
  </g>
  <g filter="url(#b3)" fill="#5fc2ff" opacity=".8">
    <ellipse cx="1519" cy="539" rx="7" ry="8"/><ellipse cx="1524" cy="500" rx="5" ry="4"/>
    <path d="M1612 489.5 L1640 492 L1657.5 506 L1655 512" fill="none" stroke="#5fc2ff" stroke-width="10" stroke-linecap="round" stroke-linejoin="round"/>
  </g>
  <g filter="url(#b2)" fill="#35e6ff" opacity=".9">
    <path d="M1590.2 479.5 C1595 480 1599 481.5 1600.6 484.1 C1603 488 1603.2 491 1602.5 494.4 C1602 500 1601 505 1599.3 510 C1597.5 515 1595 518.5 1591.5 520.4 C1587 522.8 1583 523.4 1578.5 523 C1573 522.6 1568.5 521.6 1565.6 519.1 C1562 516.5 1559.6 513.5 1559.1 510 C1558.6 505 1560.5 501 1563 497 C1566 492 1569.5 488.5 1573.3 485.4 C1576.5 482.8 1580 481 1583.7 480.2 C1586 479.6 1588 479.4 1590.2 479.5 Z" stroke="#35e6ff" stroke-width="17" stroke-linejoin="round"/><ellipse cx="1544" cy="516.5" rx="23" ry="15.5"/>
  </g>
  <g filter="url(#b15)" fill="#3dff4a">
    <path d="M1590.2 479.5 C1595 480 1599 481.5 1600.6 484.1 C1603 488 1603.2 491 1602.5 494.4 C1602 500 1601 505 1599.3 510 C1597.5 515 1595 518.5 1591.5 520.4 C1587 522.8 1583 523.4 1578.5 523 C1573 522.6 1568.5 521.6 1565.6 519.1 C1562 516.5 1559.6 513.5 1559.1 510 C1558.6 505 1560.5 501 1563 497 C1566 492 1569.5 488.5 1573.3 485.4 C1576.5 482.8 1580 481 1583.7 480.2 C1586 479.6 1588 479.4 1590.2 479.5 Z" stroke="#3dff4a" stroke-width="12.5" stroke-linejoin="round"/><ellipse cx="1546" cy="516" rx="19.5" ry="12.5"/>
  </g>
  <g filter="url(#b15)" fill="#f4f400">
    <path d="M1590.2 479.5 C1595 480 1599 481.5 1600.6 484.1 C1603 488 1603.2 491 1602.5 494.4 C1602 500 1601 505 1599.3 510 C1597.5 515 1595 518.5 1591.5 520.4 C1587 522.8 1583 523.4 1578.5 523 C1573 522.6 1568.5 521.6 1565.6 519.1 C1562 516.5 1559.6 513.5 1559.1 510 C1558.6 505 1560.5 501 1563 497 C1566 492 1569.5 488.5 1573.3 485.4 C1576.5 482.8 1580 481 1583.7 480.2 C1586 479.6 1588 479.4 1590.2 479.5 Z" stroke="#f4f400" stroke-width="7.5" stroke-linejoin="round"/><ellipse cx="1549" cy="515.5" rx="14.5" ry="8" opacity=".9"/>
  </g>
  <g filter="url(#b1)" fill="#ff9a00"><path d="M1590.2 479.5 C1595 480 1599 481.5 1600.6 484.1 C1603 488 1603.2 491 1602.5 494.4 C1602 500 1601 505 1599.3 510 C1597.5 515 1595 518.5 1591.5 520.4 C1587 522.8 1583 523.4 1578.5 523 C1573 522.6 1568.5 521.6 1565.6 519.1 C1562 516.5 1559.6 513.5 1559.1 510 C1558.6 505 1560.5 501 1563 497 C1566 492 1569.5 488.5 1573.3 485.4 C1576.5 482.8 1580 481 1583.7 480.2 C1586 479.6 1588 479.4 1590.2 479.5 Z" stroke="#ff9a00" stroke-width="3.2" stroke-linejoin="round"/></g>
  <g filter="url(#b1)" fill="#ff1000" transform="translate(1581.5 501) scale(.95) translate(-1581.5 -501)"><path d="M1590.2 479.5 C1595 480 1599 481.5 1600.6 484.1 C1603 488 1603.2 491 1602.5 494.4 C1602 500 1601 505 1599.3 510 C1597.5 515 1595 518.5 1591.5 520.4 C1587 522.8 1583 523.4 1578.5 523 C1573 522.6 1568.5 521.6 1565.6 519.1 C1562 516.5 1559.6 513.5 1559.1 510 C1558.6 505 1560.5 501 1563 497 C1566 492 1569.5 488.5 1573.3 485.4 C1576.5 482.8 1580 481 1583.7 480.2 C1586 479.6 1588 479.4 1590.2 479.5 Z"/></g>
</g>
<text x="1592.4" y="476.4" font-size="9.5" fill="#2b4fc0" text-anchor="middle" opacity=".75">Pretoria</text>
<text x="1539.4" y="520.4" font-size="7.8" fill="#20b0a0" text-anchor="middle" opacity=".7">Klerksdorp</text>
<!-- attribution -->
<rect x="1730" y="686.5" width="147" height="10" fill="#fff" opacity=".8"/>
<rect x="1733" y="688.5" width="7" height="2.3" fill="#4c7be1"/><rect x="1733" y="690.8" width="7" height="2.3" fill="#ffd500"/>
<text x="1742" y="694.3" font-size="7.1" fill="#0078a8">Leaflet</text><text x="1765.5" y="694.3" font-size="7.1" fill="#444">| ©</text><text x="1779" y="694.3" font-size="7.1" fill="#0078a8">OpenStreetMap</text><text x="1832.5" y="694.3" font-size="7.1" fill="#444">contributors</text>
<!-- zoom control -->
<rect x="1060" y="209.5" width="25" height="48" rx="3.5" fill="#c4c2be"/>
<rect x="1061" y="210.5" width="23" height="46" rx="2.5" fill="#fff"/>
<rect x="1061" y="233" width="23" height="1" fill="#ccc"/>
<path d="M1067.5 222 H1077.5 M1072.5 217 V227" stroke="#111" stroke-width="1.8"/><path d="M1067.8 245 H1077.2" stroke="#111" stroke-width="1.6"/>
</svg>

<!-- BOTTOM LEFT CARD -->
<div class="card" style="left:165px;top:703px;width:856px;height:400px"></div>
<div class="h" id="h2" style="left:181px;top:732px">Incidents by Day of the Week</div>
<svg class="abs" id="ch1" style="left:165px;top:760px" width="856" height="230" viewBox="165 825 856 230" font-family="Liberation Sans, sans-serif">
  <text x="648" y="858.6" font-size="15.1" fill="#111" text-anchor="middle">Top 10 Areas by Number of Incidents</text>
  <g stroke="#cfcfcf" stroke-width="1.2"><path d="M305.8 865 V1060"/><path d="M393.8 865 V1060"/><path d="M482 865 V1060"/><path d="M570.2 865 V1060"/><path d="M658.4 865 V1060"/><path d="M746.6 865 V1060"/><path d="M834.8 865 V1060"/><path d="M923 865 V1060"/></g>
  <rect x="306.3" y="869.5" width="651.7" height="35.5" fill="#3274a1" stroke="#fcfcfb" stroke-width="4.5" paint-order="stroke"/>
  <rect x="306.3" y="915.7" width="183.4" height="35.5" fill="#e1812c" stroke="#fcfcfb" stroke-width="4.5" paint-order="stroke"/>
  <rect x="306.3" y="961.9" width="139.3" height="35.5" fill="#3a923a" stroke="#fcfcfb" stroke-width="4.5" paint-order="stroke"/>
  <rect x="306.3" y="1008.2" width="68.5" height="35.5" fill="#c03d3e" stroke="#fcfcfb" stroke-width="4.5" paint-order="stroke"/>
  <g font-size="12.6" fill="#1a1a1a" text-anchor="end"><text x="293.2" y="891.8">Sentrarand</text><text x="293.2" y="938">Vereeniging</text><text x="293.2" y="984.2">Fochville</text><text x="293.2" y="1030.5">Natal Spruit</text></g>
</svg>
<!-- BOTTOM RIGHT CARD -->
<div class="card" style="left:1037px;top:704px;width:855px;height:400px"></div>
<div class="h" id="h3" style="left:1052px;top:735.5px">Incidents by Area</div>
<svg class="abs" id="ch2" style="left:1037px;top:770px" width="855" height="220" viewBox="1037 835 855 220" font-family="Liberation Sans, sans-serif">
  <text x="1489.5" y="867.6" font-size="18.2" fill="#111" text-anchor="middle">Incidents by Day of the Week</text>
  <g stroke="#cdcdcd" stroke-width="1.3"><path d="M1121 890.3 H1858"/><path d="M1121 936.2 H1858"/><path d="M1121 982.1 H1858"/><path d="M1121 1028 H1858"/></g>
  <g font-size="14.6" fill="#1a1a1a" text-anchor="end"><text x="1106.2" y="896.2">35</text><text x="1106.2" y="942.1">30</text><text x="1106.2" y="988">25</text><text x="1106.2" y="1033.9">20</text></g>
  <text transform="translate(1081.2 1045) rotate(-90)" font-size="14.6" fill="#1a1a1a">of Incidents</text>
  <rect x="1132" y="965" width="82.4" height="100" fill="#cc3359" stroke="#fcfcfb" stroke-width="4.5" paint-order="stroke"/>
  <rect x="1237.7" y="1020" width="82.4" height="50" fill="#4ca65b" stroke="#fcfcfb" stroke-width="4.5" paint-order="stroke"/>
  <rect x="1343.3" y="891" width="82.4" height="170" fill="#e5cf37" stroke="#fcfcfb" stroke-width="4.5" paint-order="stroke"/>
  <rect x="1448.9" y="1001.6" width="82.4" height="60" fill="#566dc5" stroke="#fcfcfb" stroke-width="4.5" paint-order="stroke"/>
  <rect x="1554.5" y="974" width="82.4" height="90" fill="#e08752" stroke="#fcfcfb" stroke-width="4.5" paint-order="stroke"/>
  <rect x="1660.1" y="1020" width="82.4" height="50" fill="#8c2fae" stroke="#fcfcfb" stroke-width="4.5" paint-order="stroke"/>
  <rect x="1765.7" y="992.4" width="82.4" height="70" fill="#5cc6e0" stroke="#fcfcfb" stroke-width="4.5" paint-order="stroke"/>
  <text x="1655" y="974.5" font-size="14.6" fill="#8a8a8a" opacity=".55">Activate Windows</text>
  <text x="1655" y="990" font-size="10.8" fill="#8a8a8a" opacity=".5">Go to Settings to activate Windows.</text>
</svg>

<!--PAGE-CONTENT4-->
</div>

<!-- ======= TASKBAR ======= -->
<div id="task">
<!-- weather -->
<svg class="abs" style="left:12px;top:4px" width="26" height="28" viewBox="0 0 26 28"><defs><clipPath id="sunc"><rect x="0" y="13" width="26" height="15"/></clipPath></defs><circle cx="12.5" cy="17" r="7.2" fill="#f2a233" clip-path="url(#sunc)"/><circle cx="12.5" cy="16" r="6.4" fill="#f2a233"/><rect x="5" y="9.2" width="5" height="1.5" rx=".7" fill="#f7d65a"/><rect x="3.5" y="12.2" width="9" height="1.5" rx=".7" fill="#f7d65a"/><rect x="2" y="15.2" width="16" height="1.6" rx=".8" fill="#f9dc6a"/><rect x="2" y="18.4" width="14.5" height="1.6" rx=".8" fill="#f9dc6a"/><circle cx="17.6" cy="7" r="5.6" fill="#f48fb0"/><text x="17.6" y="9.8" font-size="8" fill="#2a1a20" text-anchor="middle" font-family="Liberation Sans, sans-serif">1</text></svg>
<div class="tt" style="left:38px;top:7px;font-size:9px">28°C</div><div class="tt" style="left:38px;top:19px;font-size:9px;color:#cfcfcf">Haze</div>
<!-- start -->
<svg class="abs" style="left:685.5px;top:9.5px" width="19" height="19" viewBox="0 0 19 19"><defs><linearGradient id="wg" x1="0" y1="0" x2="1" y2="1"><stop offset="0" stop-color="#6fdcff"/><stop offset="1" stop-color="#1a9fe8"/></linearGradient></defs><rect x="0" y="0" width="8.9" height="8.9" rx=".8" fill="url(#wg)"/><rect x="9.9" y="0" width="8.9" height="8.9" rx=".8" fill="url(#wg)"/><rect x="0" y="9.9" width="8.9" height="8.9" rx=".8" fill="url(#wg)"/><rect x="9.9" y="9.9" width="8.9" height="8.9" rx=".8" fill="url(#wg)"/></svg>
<!-- search -->
<div class="abs" style="left:713.5px;top:5.5px;width:164px;height:25px;border-radius:13px;background:#4a3d41;border:1px solid #5a4e52"></div>
<svg class="abs" style="left:721px;top:11px" width="14" height="14" viewBox="0 0 14 14"><circle cx="5.8" cy="5.8" r="4" fill="none" stroke="#f0f0f0" stroke-width="1.4"/><path d="M8.8 8.8 L12 12" stroke="#f0f0f0" stroke-width="1.5" stroke-linecap="round"/></svg>
<div class="tt" style="left:741px;top:12px;font-size:9.8px;color:#ededed;text-shadow:0 0 .4px #fff">Search</div>
<svg class="abs" style="left:838px;top:8px" width="40" height="21" viewBox="0 0 40 21"><rect x="1" y="13" width="18" height="3" rx="1.5" fill="#f0a0b8"/><rect x="2" y="16" width="16" height="2.6" rx="1.3" fill="#c8d84a"/><rect x="1" y="10.6" width="17" height="2.4" rx="1.2" fill="#e8c040"/><rect x="18.5" y="6" width="3" height="13.5" fill="#4a7adf"/><rect x="21.5" y="4.5" width="3.4" height="15" fill="#e86aa8"/><rect x="25" y="3" width="3.6" height="16.5" fill="#8a6ae0"/><rect x="28.6" y="3.5" width="3.6" height="16" fill="#e8a040"/><rect x="32.2" y="4.5" width="3" height="14.5" fill="#c85a3a" transform="rotate(6 33 12)"/><rect x="35" y="5" width="2.6" height="13.5" fill="#4a9a5a" transform="rotate(8 36 12)"/></svg>
<!-- copilot -->
<svg class="abs" style="left:885px;top:7px" width="22" height="23" viewBox="0 0 22 23"><path d="M6 2 h6 q3 0 3.6 3 l.8 4 h-5 l-1.2 -4 q-.4 -1.4 -1.8 -1.4 z" fill="#2a8ae8"/><path d="M3 6 q.8 -3 4 -3 l2 0 l-2.4 9 q-.6 2 -2.6 2 h-1.6 q-2 0 -1.4 -2 z" fill="#3ac07a"/><path d="M19 8 q2 0 1.6 2 l-1.4 6 q-.8 3 -4 3 h-2 l2.4 -9 q.6 -2 2.6 -2 z" fill="#d85ab8"/><path d="M5 14 h5 l1 3 q.4 2 2.4 2 h-7 q-3 0 -3.4 -3 z" fill="#f0b030"/><rect x="7" y="15.5" width="14" height="7" rx="2" fill="#f0c020"/><text x="14" y="21" font-size="5.4" font-weight="700" fill="#222" text-anchor="middle" font-family="Liberation Sans, sans-serif">PRE</text></svg>
<!-- task view -->
<div class="abs" style="left:919px;top:14px;width:14px;height:12px;background:#7b7b7b;border-radius:1px"></div><div class="abs" style="left:924px;top:9px;width:14px;height:12px;background:#f2f2f2;border-radius:1px"></div><div class="abs" style="left:924px;top:14px;width:9px;height:7px;background:#bdbdbd"></div>
<!-- teams -->
<svg class="abs" style="left:952px;top:7.5px" width="21" height="21" viewBox="0 0 21 21"><circle cx="16" cy="5" r="2.6" fill="#7b83eb"/><circle cx="11" cy="3.8" r="3.2" fill="#5059c9"/><rect x="9" y="7.5" width="11.5" height="10" rx="3" fill="#7b83eb"/><rect x="6" y="7.5" width="11" height="12.5" rx="3" fill="#5059c9"/><rect x="0.5" y="5" width="11" height="11" rx="1.4" fill="#fff"/><rect x="1.5" y="6" width="9" height="9" rx="1" fill="#4b53bc"/><path d="M3.6 8.2 H8.4 M6 8.2 V13.4" stroke="#fff" stroke-width="1.5"/></svg>
<!-- explorer -->
<svg class="abs" style="left:985px;top:8px" width="21" height="20" viewBox="0 0 21 20"><path d="M1 2.5 q0 -1.5 1.5 -1.5 h5 l2 2.5 h9 q1.5 0 1.5 1.5 v10 h-19 z" fill="#f5b92e"/><rect x="1" y="5.5" width="19" height="11.5" rx="1.2" fill="#fcd55a"/><rect x="4.5" y="10.5" width="12" height="6.5" rx=".8" fill="#2f8fe8"/><rect x="4.5" y="14.5" width="12" height="2.5" fill="#1a6fd0"/></svg>
<!-- edge -->
<svg class="abs" style="left:1018px;top:7.5px" width="21" height="21" viewBox="0 0 21 21"><defs><linearGradient id="eg" x1="0" y1="0" x2="1" y2="1"><stop offset="0" stop-color="#35c4f0"/><stop offset=".6" stop-color="#1b7fd6"/><stop offset="1" stop-color="#0e56b0"/></linearGradient></defs><circle cx="10.5" cy="10.5" r="9.6" fill="url(#eg)"/><path d="M3 6 Q8 -1 16 3 Q20 6 19.5 10 Q18 14 13 13 Q14.5 10 12 8 Q8 6 5 9 Q3.2 11 3.4 14 Q1.2 10 3 6 Z" fill="#4fd88a" opacity=".9"/><path d="M8.5 11 Q8 15 12 17.5 Q9 18 6.5 15.5 Q5.6 12 8.5 11 Z" fill="#2a1a1e"/></svg>
<!-- store -->
<svg class="abs" style="left:1051px;top:7px" width="20" height="22" viewBox="0 0 20 22"><path d="M6 6 V4 Q6 1.5 8.5 1.5 H11.5 Q14 1.5 14 4 V6" fill="none" stroke="#4aa8e8" stroke-width="1.6"/><rect x="1" y="5.5" width="18" height="15" rx="2.2" fill="#f3efe9"/><rect x="5.8" y="8.8" width="3.6" height="3.6" fill="#f25022"/><rect x="10.4" y="8.8" width="3.6" height="3.6" fill="#7fba00"/><rect x="5.8" y="13.4" width="3.6" height="3.6" fill="#00a4ef"/><rect x="10.4" y="13.4" width="3.6" height="3.6" fill="#ffb900"/></svg>
<!-- chrome (active) -->
<div class="abs" style="left:1079.5px;top:3px;width:29px;height:31px;border-radius:4px;background:#43282b"></div>
<svg class="abs" style="left:1083px;top:7px" width="24" height="23" viewBox="0 0 24 23"><circle cx="11" cy="12.5" r="9.5" fill="#e33b2e"/><path d="M11 12.5 L2.8 7.8 A9.5 9.5 0 0 0 7 21.1 Z" fill="#2da94f"/><path d="M11 12.5 L7 21.1 A9.5 9.5 0 0 0 20.4 11 L11 11 Z" fill="#fcc934"/><path d="M11 12.5 L2.8 7.8 A9.5 9.5 0 0 1 20.4 11 L11 11 Z" fill="#e33b2e"/><circle cx="11" cy="12.5" r="4.4" fill="#fff"/><circle cx="11" cy="12.5" r="3.5" fill="#3f7fe8"/><circle cx="18.5" cy="5" r="4.8" fill="#5a6270"/><text x="18.5" y="7.3" font-size="6.2" font-weight="700" fill="#e8e8e8" text-anchor="middle" font-family="Liberation Sans, sans-serif">T</text></svg>
<div class="abs" style="left:1088px;top:30.5px;width:12px;height:2.4px;border-radius:1px;background:#f08a5a"></div>
<!-- discord -->
<svg class="abs" style="left:1116px;top:6px" width="25" height="24" viewBox="0 0 25 24"><circle cx="11" cy="13.5" r="9.6" fill="#5865f2"/><path d="M5.8 10.6 Q8.2 9 11 9 Q13.8 9 16.2 10.6 Q17.6 13.6 17.4 16.6 Q15.8 17.8 14.4 18 L13.6 16.8 Q11 17.6 8.4 16.8 L7.6 18 Q6.2 17.8 4.6 16.6 Q4.4 13.6 5.8 10.6 Z" fill="#fff"/><ellipse cx="8.9" cy="13.8" rx="1.3" ry="1.5" fill="#5865f2"/><ellipse cx="13.1" cy="13.8" rx="1.3" ry="1.5" fill="#5865f2"/><circle cx="18.8" cy="5.8" r="4.8" fill="#e0555a"/><circle cx="18.8" cy="5.8" r="2.2" fill="#fff"/></svg>
<!-- yellow ring -->
<svg class="abs" style="left:1150px;top:7.5px" width="21" height="21"><circle cx="10.5" cy="10.5" r="7.4" fill="none" stroke="#ffd800" stroke-width="4.4"/></svg>
<!-- xbox -->
<svg class="abs" style="left:1183px;top:8px" width="20" height="20" viewBox="0 0 20 20"><rect x="0" y="0" width="20" height="20" rx="1.6" fill="#107c10"/><circle cx="10" cy="10.4" r="7.4" fill="#fff"/><path d="M10 5.6 Q7.6 3.4 5.6 4 Q7.8 2.4 10 2.4 Q12.2 2.4 14.4 4 Q12.4 3.4 10 5.6 Z" fill="#107c10"/><path d="M10 8.4 Q5.6 12.4 4.8 15.6 Q2.6 13.4 2.6 10.4 Q2.6 7.6 4.4 5.6 Q7 5.8 10 8.4 Z M10 8.4 Q14.4 12.4 15.2 15.6 Q17.4 13.4 17.4 10.4 Q17.4 7.6 15.6 5.6 Q13 5.8 10 8.4 Z" fill="#107c10" transform="translate(10 10.4) scale(.82) translate(-10 -10.4)"/></svg>
<!-- vscode -->
<svg class="abs" style="left:1216px;top:7.5px" width="21" height="21" viewBox="0 0 21 21"><path d="M15 1 L20 3.4 V17.6 L15 20 L6 12 L2.4 14.8 L1 14 V7 L2.4 6.2 L6 9 Z" fill="#2a9cf0"/><path d="M15 1 L20 3.4 V17.6 L15 20 Z" fill="#1a78d0"/><path d="M15 6.4 L9.4 10.5 L15 14.6 Z" fill="#2a1a1e"/><path d="M2.6 8.6 L4.8 10.5 L2.6 12.4 Z" fill="#2a1a1e"/></svg>
<!-- running indicators -->
<div class="abs" style="left:993px;top:30.5px;width:5px;height:2px;border-radius:1px;background:#9a9a9a"></div><div class="abs" style="left:1058.5px;top:30.5px;width:5px;height:2px;border-radius:1px;background:#9a9a9a"></div><div class="abs" style="left:1124.5px;top:30.5px;width:5px;height:2px;border-radius:1px;background:#9a9a9a"></div><div class="abs" style="left:1158px;top:30.5px;width:5px;height:2px;border-radius:1px;background:#9a9a9a"></div><div class="abs" style="left:1190.5px;top:30.5px;width:5px;height:2px;border-radius:1px;background:#9a9a9a"></div><div class="abs" style="left:1224px;top:30.5px;width:5px;height:2px;border-radius:1px;background:#9a9a9a"></div>
<!-- tray -->
<svg class="abs" style="left:1718px;top:14.5px" width="11" height="8" viewBox="0 0 11 8"><path d="M1.5 6 L5.5 2 L9.5 6" fill="none" stroke="#fff" stroke-width="1.3" stroke-linecap="round" stroke-linejoin="round"/></svg>
<svg class="abs" style="left:1740px;top:13px" width="16" height="11" viewBox="0 0 16 11"><path d="M3.6 10 Q.6 10 .6 7.4 Q.6 5 3.2 4.8 Q4 1.4 7.4 1.4 Q10.2 1.4 11.2 4 Q14.8 4 14.8 7.2 Q14.8 10 11.8 10 Z" fill="#eaeaea"/><path d="M.8 8 Q5 5 14.6 7" stroke="#bdbdbd" stroke-width="1" fill="none"/></svg>
<div class="tt" style="left:1766px;top:7.5px;width:20px;text-align:center;font-size:8.4px;text-shadow:0 0 .4px #fff">ENG</div><div class="tt" style="left:1766px;top:19.5px;width:20px;text-align:center;font-size:8.4px;text-shadow:0 0 .4px #fff">IN</div>
<svg class="abs" style="left:1797px;top:11px" width="15" height="12" viewBox="0 0 15 12"><path d="M1 4.4 Q7.5 -1.6 14 4.4" fill="none" stroke="#fff" stroke-width="1.1"/><path d="M3.2 6.6 Q7.5 2.6 11.8 6.6" fill="none" stroke="#fff" stroke-width="1.1"/><path d="M5.2 8.6 Q7.5 6.6 9.8 8.6" fill="none" stroke="#fff" stroke-width="1.1"/><circle cx="7.5" cy="10.4" r="1" fill="#fff"/></svg>
<svg class="abs" style="left:1815px;top:12px" width="15" height="12" viewBox="0 0 15 12"><path d="M1 4.2 H3.4 L6.6 1.4 V10.6 L3.4 7.8 H1 Z" fill="none" stroke="#fff" stroke-width="1" stroke-linejoin="round"/><path d="M8.6 4 Q9.8 6 8.6 8" fill="none" stroke="#fff" stroke-width="1"/><path d="M10.4 2.6 Q12.6 6 10.4 9.4" fill="none" stroke="#fff" stroke-width="1"/><path d="M12.2 1.4 Q15.2 6 12.2 10.6" fill="none" stroke="#9a9a9a" stroke-width=".9"/></svg>
<div class="tt" style="left:1827px;top:7px;width:60.5px;text-align:right;font-size:8.6px;text-shadow:0 0 .4px #fff">00:06</div><div class="tt" style="left:1827px;top:19px;width:60.5px;text-align:right;font-size:8.6px;text-shadow:0 0 .4px #fff">24-04-2024</div>
<svg class="abs" style="left:1893px;top:12px" width="12" height="13" viewBox="0 0 12 13"><path d="M6 .8 Q9.6 .8 9.6 5 V8 L11 10 H1 L2.4 8 V5 Q2.4 .8 6 .8 Z" fill="#f2a274"/><path d="M4.4 11 Q6 12.8 7.6 11 Z" fill="#f2a274"/></svg>

</div>
</body></html>
